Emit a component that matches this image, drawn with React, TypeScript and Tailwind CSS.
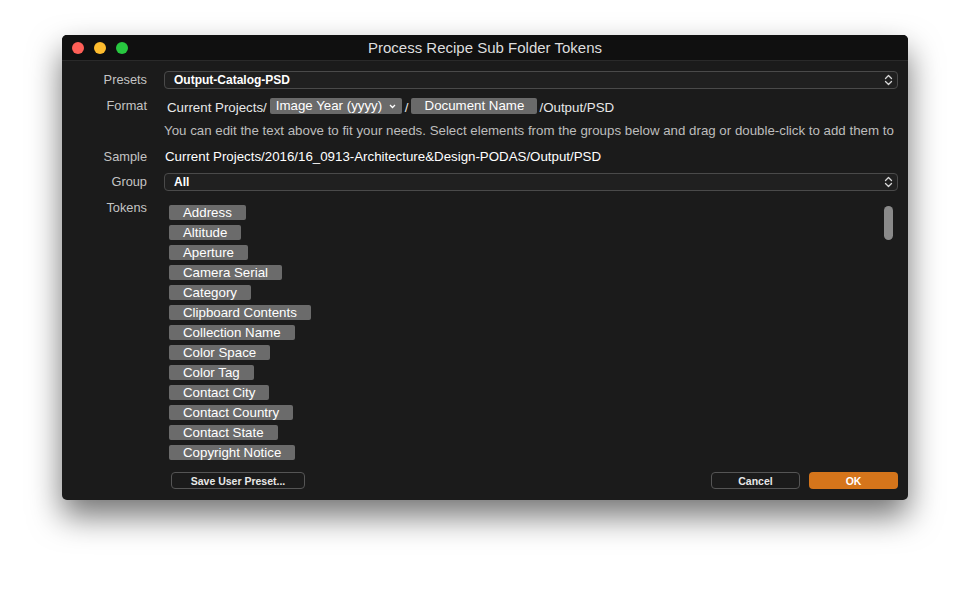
import React from "react";

const tokens = [
  "Address",
  "Altitude",
  "Aperture",
  "Camera Serial",
  "Category",
  "Clipboard Contents",
  "Collection Name",
  "Color Space",
  "Color Tag",
  "Contact City",
  "Contact Country",
  "Contact State",
  "Copyright Notice",
];

function UpDown() {
  return (
    <svg width="9" height="12" viewBox="0 0 9 12" fill="none" stroke="#d8d8d8" strokeWidth="1.3" strokeLinecap="round" strokeLinejoin="round">
      <path d="M1.5 4.5 L4.5 1.5 L7.5 4.5" />
      <path d="M1.5 7.5 L4.5 10.5 L7.5 7.5" />
    </svg>
  );
}

function Select({ text }: { text: string }) {
  return (
    <div className="flex-1 h-[18px] rounded-[4px] border border-[#4a4a4a] bg-[#202020] flex items-center justify-between pl-[9px] pr-[4px]">
      <span className="text-[12px] leading-[16px] text-white font-semibold">{text}</span>
      <UpDown />
    </div>
  );
}

function Label({ children }: { children: React.ReactNode }) {
  return <div className="w-[85px] text-right text-[12.8px] leading-[16px] text-[#c4c4c4] shrink-0">{children}</div>;
}

export default function App() {
  return (
    <div className="w-[970px] h-[589px] bg-white pl-[62px] pt-[35px]" style={{ fontFamily: '"Liberation Sans", Arial, sans-serif' }}>
      <div className="w-[846px] h-[465px] rounded-[5px] bg-[#1b1b1b] overflow-hidden flex flex-col shadow-[0_16px_32px_rgba(0,0,0,0.55)]">
        {/* title bar */}
        <div className="h-[26px] bg-[#101010] border-b border-[#2a2a2a] flex items-center relative shrink-0">
          <div className="flex items-center gap-[10px] pl-[10px]">
            <div className="w-[12px] h-[12px] rounded-full bg-[#fe5f57]" />
            <div className="w-[12px] h-[12px] rounded-full bg-[#febc2e]" />
            <div className="w-[12px] h-[12px] rounded-full bg-[#28c840]" />
          </div>
          <div className="absolute left-0 right-0 text-center text-[15px] leading-[18px] text-[#dedede] pointer-events-none">Process Recipe Sub Folder Tokens</div>
        </div>

        <div className="flex-1 flex flex-col pr-[10px] pt-[10px]">
          {/* Presets */}
          <div className="flex items-center h-[18px]">
            <Label>Presets</Label>
            <div className="w-[17px]" />
            <Select text="Output-Catalog-PSD" />
          </div>

          {/* Format */}
          <div className="flex items-start mt-[9px] h-[16px]">
            <Label>Format</Label>
            <div className="w-[20px]" />
            <div className="flex items-start text-[13.3px] leading-[16px] text-[#e8e8e8] h-[16px]">
              <span className="mt-[2px]">Current Projects/</span>
              <div className="ml-[3px] h-[16px] w-[132px] rounded-[2px] bg-[#6a6a6a] flex items-center pl-[6px] text-white">
                <span>Image Year (yyyy)</span>
                <svg className="ml-[7px]" width="7" height="5" viewBox="0 0 7 5"><path d="M1 1 L3.5 3.5 L6 1" stroke="#fff" strokeWidth="1.3" fill="none" /></svg>
              </div>
              <span className="ml-[3px] mt-[2px]">/</span>
              <div className="ml-[3px] h-[16px] w-[126px] rounded-[2px] bg-[#6a6a6a] flex items-center justify-center text-white">Document Name</div>
              <span className="ml-[2px] mt-[2px]">/Output/PSD</span>
            </div>
          </div>

          {/* help */}
          <div className="pl-[102px] mt-[9px] text-[13.3px] leading-[16px] text-[#bdbdbd] whitespace-nowrap">
            You can edit the text above to fit your needs. Select elements from the groups below and drag or double-click to add them to
          </div>

          {/* Sample */}
          <div className="flex items-center mt-[10px] h-[16px]">
            <Label>Sample</Label>
            <div className="w-[18px]" />
            <span className="text-[13.3px] leading-[16px] text-white">Current Projects/2016/16_0913-Architecture&amp;Design-PODAS/Output/PSD</span>
          </div>

          {/* Group */}
          <div className="flex items-center h-[18px] mt-[8px]">
            <Label>Group</Label>
            <div className="w-[17px]" />
            <Select text="All" />
          </div>

          {/* Tokens */}
          <div className="flex mt-[9px]">
            <Label>Tokens</Label>
            <div className="w-[22px]" />
            <div className="flex-1 flex flex-col gap-[5px] mt-[5px]">
              {tokens.map((t) => (
                <div key={t} className="self-start h-[15px] rounded-[2px] bg-[#6b6b6b] pl-[14px] pr-[14px] flex items-center text-[13.3px] leading-[15px] text-white">
                  {t}
                </div>
              ))}
            </div>
            <div className="w-[9px] h-[34px] rounded-full bg-[#8a8a8a] mt-[6px] mr-[5px]" />
          </div>

          {/* buttons */}
          <div className="flex items-center mt-[12px]">
            <div className="w-[109px]" />
            <div className="w-[134px] h-[17px] rounded-[4px] border border-[#555] bg-[#1b1b1b] flex items-center justify-center text-[10.5px] leading-[14px] text-[#e8e8e8] font-semibold">Save User Preset...</div>
            <div className="flex-1" />
            <div className="w-[89px] h-[17px] rounded-[4px] border border-[#555] bg-[#1b1b1b] flex items-center justify-center text-[10.5px] leading-[14px] text-[#e8e8e8] font-semibold">Cancel</div>
            <div className="w-[9px]" />
            <div className="w-[89px] h-[17px] rounded-[4px] bg-[#d5751b] flex items-center justify-center text-[10.5px] leading-[14px] text-white font-semibold">OK</div>
          </div>
        </div>
      </div>
    </div>
  );
}
